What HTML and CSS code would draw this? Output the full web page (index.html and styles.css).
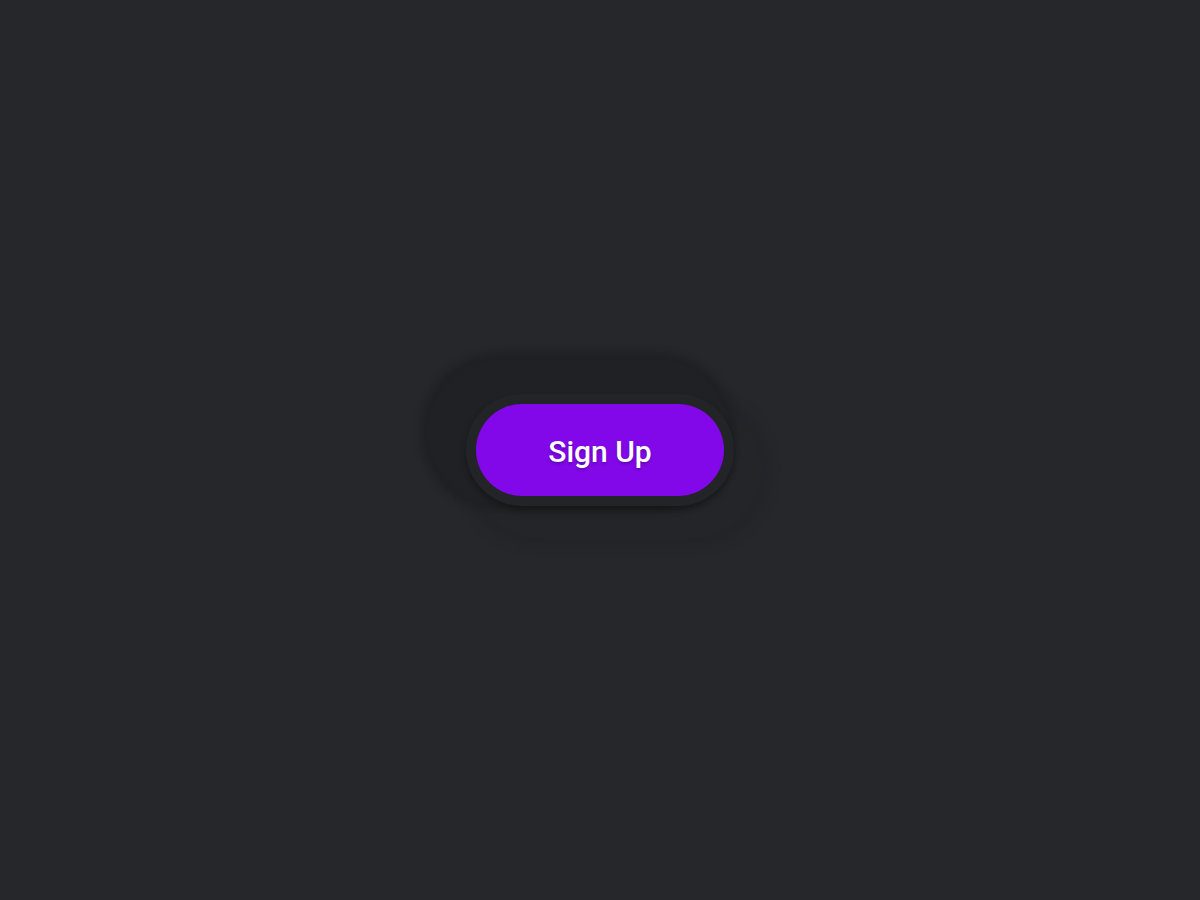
FILE: index.html
```html
<!DOCTYPE html>
<html lang="en">
<head>
  <meta charset="UTF-8">
  <title>Sign Up</title>
  <link rel="stylesheet" href="styles.css">
</head>
<body>
  <div class="stage">
    <div class="ring">
      <button class="signup-button" type="button">Sign Up</button>
    </div>
  </div>
</body>
</html>
```

FILE: styles.css
```css
html, body {
  height: 100%;
}

body {
  margin: 0;
  background: #26272b;
  font-family: Roboto, "Liberation Sans", sans-serif;
}

.stage {
  height: 100%;
  display: flex;
  align-items: center;
  justify-content: center;
}

.ring {
  padding: 10px;
  border-radius: 56px;
  background: #232427;
  box-shadow:
    0 4px 6px rgba(0, 0, 0, 0.3),
    -22px -18px 6px 24px #202124,
    16px 20px 8px 22px #242529;
}

.signup-button {
  display: block;
  width: 248px;
  height: 92px;
  padding: 2px 0 0;
  border: none;
  border-radius: 46px;
  background: #8208e9;
  color: #fff;
  font-family: Roboto, "Liberation Sans", sans-serif;
  font-size: 30px;
  font-weight: 500;
  text-shadow: 0 2px 3px rgba(0, 0, 0, 0.25);
  cursor: pointer;
}
```
